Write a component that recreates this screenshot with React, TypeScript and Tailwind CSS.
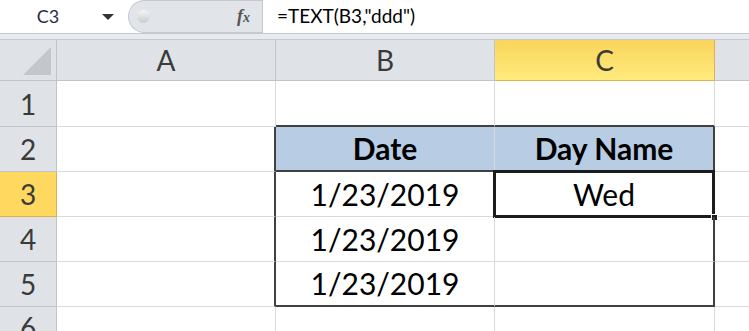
import React from 'react';

const cols = ['A', 'B', 'C'];
const rows = [
  { n: 1, h: 'h-[46px]' },
  { n: 2, h: 'h-[45px]' },
  { n: 3, h: 'h-[45px]' },
  { n: 4, h: 'h-[45px]' },
  { n: 5, h: 'h-[45px]' },
];

const cellData: Record<string, { text: string; bold?: boolean }> = {
  B2: { text: 'Date', bold: true },
  C2: { text: 'Day Name', bold: true },
  B3: { text: '1/23/2019' },
  C3: { text: 'Wed' },
  B4: { text: '1/23/2019' },
  B5: { text: '1/23/2019' },
};

const FormulaBar = () => (
  <div className="flex h-[34px] border-b border-[#c5c9cf] bg-white">
    {/* Name box */}
    <div className="relative flex w-[128px] items-center">
      <span className="w-[96px] text-center text-[18px] text-[#1f2d45]">C3</span>
      <span className="ml-[6px] h-0 w-0 border-x-[6px] border-t-[6px] border-x-transparent border-t-[#333]" />
    </div>
    {/* Grip + fx */}
    <div className="flex w-[134px] items-center rounded-l-full border-y border-l border-[#c5c9cf] bg-[#e1e4e9]">
      <span className="ml-[8px] h-[13px] w-[13px] rounded-full bg-gradient-to-b from-[#f4f5f7] to-[#c9ccd1]" />
      <span
        className="ml-auto mr-[12px] text-[18px] italic font-bold text-[#555]"
        style={{ fontFamily: '"Liberation Serif", serif' }}
      >
        f<span className="text-[14px]">x</span>
      </span>
    </div>
    <div className="flex flex-1 items-center border-l border-[#c5c9cf] pl-[14px] text-[19px] text-black">
      =TEXT(B3,"ddd")
    </div>
  </div>
);

export default function App() {
  return (
    <div
      className="h-[331px] w-[749px] overflow-hidden bg-white"
      style={{ fontFamily: 'Lato, "Open Sans", sans-serif' }}
    >
      <FormulaBar />
      <div className="h-[6px] border-b border-[#c5c9cf] bg-[#e9ebf1]" />

      <div className="grid grid-cols-[57px_219px_219px_220px_1fr]">
        {/* header row */}
        <div className="relative h-[41px] border-r border-b border-[#c0c4c9] bg-[#dfe3e8]">
          <div className="absolute bottom-[5px] right-[5px] h-0 w-0 border-b-[28px] border-l-[28px] border-b-[#c3c7cb] border-l-transparent" />
        </div>
        {cols.map((c) => (
          <div
            key={c}
            className={
              c === 'C'
                ? 'flex h-[41px] items-center justify-center border-r border-b border-[#e2b04e] bg-gradient-to-b from-[#f9d55a] to-[#ffeb7d] text-[28px] text-[#3a3a3a]'
                : 'flex h-[41px] items-center justify-center border-r border-b border-[#c0c4c9] bg-[#dfe3e8] text-[28px] text-[#3a3a3a]'
            }
          >
            {c}
          </div>
        ))}
        <div className="h-[41px] border-b border-[#c0c4c9] bg-[#dfe3e8]" />

        {rows.map((r) => (
          <React.Fragment key={r.n}>
            <div
              className={
                r.n === 3
                  ? `flex ${r.h} items-center justify-center border-r border-b border-[#e2b04e] bg-[#ffd95f] text-[28px] text-[#3a3a3a]`
                  : `flex ${r.h} items-center justify-center border-r border-b border-[#c0c4c9] bg-[#dfe3e8] text-[28px] text-[#3a3a3a]`
              }
            >
              {r.n}
            </div>
            {cols.map((c) => {
              const key = `${c}${r.n}`;
              const d = cellData[key];
              const inTable = (c === 'B' || c === 'C') && r.n >= 2;
              let cls = `relative flex ${r.h} items-center justify-center border-r border-b border-[#dadada] text-[30px] text-black`;
              if (inTable && r.n === 2) cls += ' bg-[#b8cce4]';
              if (inTable) {
                if (c === 'C') cls += ' border-r-[#404040] border-r-2';
                if (r.n === 5) cls += ' border-b-[#404040] border-b-2';
                if (r.n === 2) cls += ' border-b-[#404040] border-b-2';
              }
              if (c === 'A' && r.n >= 2) cls += ' border-r-[#404040] border-r-2';
              if (c !== 'A' && r.n === 1) cls += ' border-b-[#404040] border-b-2';
              if (c === 'A' && r.n === 1) cls += '';
              return (
                <div key={key} className={cls}>
                  {d && <span className={d.bold ? 'font-bold' : ''}>{d.text}</span>}
                  {key === 'C3' && (
                    <>
                      <div className="pointer-events-none absolute -left-[2px] -top-[2px] bottom-[-2px] right-[-2px] border-[3px] border-[#1c1c1c]" />
                      <div className="absolute -bottom-[5px] -right-[5px] h-[7px] w-[7px] border border-white bg-[#1c1c1c]" />
                    </>
                  )}
                </div>
              );
            })}
            <div className={`${r.h} border-b border-[#dadada]`} />
          </React.Fragment>
        ))}

        {/* row 6 */}
        <div className="flex h-[30px] items-start justify-center overflow-hidden border-r border-[#c0c4c9] bg-[#dfe3e8] pt-[6px] text-[28px] leading-none text-[#3a3a3a]">
          6
        </div>
        <div className="h-[30px] border-r border-[#dadada]" />
        <div className="h-[30px] border-r border-[#dadada]" />
        <div className="h-[30px] border-r border-[#dadada]" />
        <div className="h-[30px]" />
      </div>
    </div>
  );
}
